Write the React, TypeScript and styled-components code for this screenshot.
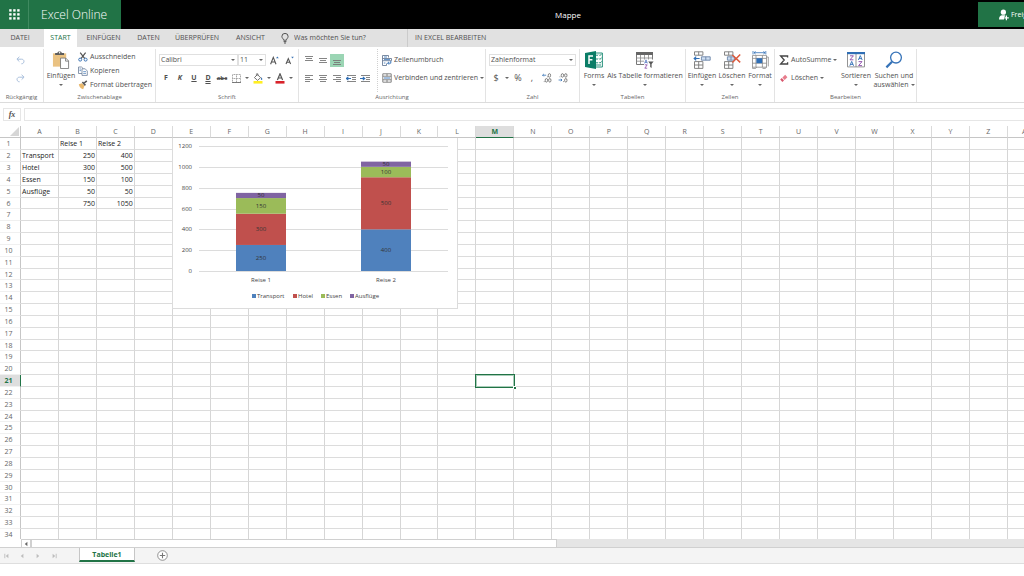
import React from "react";
import styled, { createGlobalStyle, css } from "styled-components";

const GREEN = "#217346";
const UI_FONT = '"Open Sans", "Noto Sans", sans-serif';

const GlobalStyle = createGlobalStyle`
  *, *::before, *::after { box-sizing: border-box; }
  html, body, #root { height: 100%; margin: 0; }
  body { background: #fff; color: #505050; font: 7px/10px ${UI_FONT}; overflow: hidden; }
  button, select, input { font: inherit; color: inherit; border: 0; padding: 0; margin: 0; background: none; border-radius: 0; }
  svg { display: block; flex: none; }
`;

const Page = styled.div`
  display: flex;
  flex-direction: column;
  height: 100vh;
  padding-bottom: 12px;
`;

/* ---------- header ---------- */
const Header = styled.header`
  display: flex;
  height: 29px;
  flex: none;
  background: #000;
  color: #fff;
  overflow: hidden;
`;
const Launcher = styled.button`
  width: 29px;
  background: ${GREEN};
  border-right: 1px solid #3f8a60;
  display: grid;
  place-items: center;
`;
const Brand = styled.div`
  width: 92px;
  padding-left: 12px;
  background: ${GREEN};
  font-size: 12px;
  font-weight: 300;
  line-height: 30px;
  white-space: nowrap;
`;
const DocTitle = styled.h1`
  flex: 1;
  margin: 0;
  padding-left: 37px;
  text-align: center;
  font-size: 8px;
  font-weight: 400;
  line-height: 30px;
`;
const Share = styled.button`
  display: flex;
  align-items: center;
  gap: 2px;
  width: 46px;
  height: 25px;
  margin-top: 2px;
  padding-left: 21px;
  background: ${GREEN};
  white-space: nowrap;
  overflow: hidden;
`;

/* ---------- ribbon tabs ---------- */
const TabBar = styled.nav`
  display: flex;
  height: 18px;
  flex: none;
  align-items: stretch;
  background: #e1e1e1;
  white-space: nowrap;
`;
const Tab = styled.button<{ $w: number; $after?: number; $active?: boolean }>`
  width: ${(p) => p.$w}px;
  margin-right: ${(p) => p.$after ?? 0}px;
  text-align: center;
  ${(p) => p.$active && css`background: #fff; color: ${GREEN};`}
`;
const TellMe = styled.label`
  display: flex;
  align-items: center;
  gap: 5px;
  width: 127px;
  border-right: 1px solid #cbcbcb;
`;
const TellInput = styled.input`
  width: 90px;
  outline: 0;
  &::placeholder { color: #505050; opacity: 1; }
`;
const EditLink = styled.a`
  padding-left: 7px;
  line-height: 18px;
  color: inherit;
  text-decoration: none;
`;

/* ---------- ribbon ---------- */
const Ribbon = styled.section`
  display: flex;
  height: 56px;
  flex: none;
  padding-top: 2px;
  border-bottom: 1px solid #dcdcdc;
  white-space: nowrap;
`;
const GroupBox = styled.section<{ $w: number }>`
  display: flex;
  flex-direction: column;
  width: ${(p) => p.$w}px;
  flex: none;
  border-right: 1px solid #e3e3e3;
`;
const GroupBody = styled.div<{ $pad: number }>`
  display: flex;
  flex: 1;
  padding-left: ${(p) => p.$pad}px;
`;
const GroupName = styled.h2`
  margin: 0;
  text-align: center;
  font-size: 6px;
  font-weight: 400;
  line-height: 10px;
  color: #666;
`;
const ClipActions = styled.div`
  display: flex;
  flex-direction: column;
  padding: 1px 0 0 2px;
`;
const TwoRows = styled.div<{ $w?: number; $divided?: boolean }>`
  display: flex;
  flex-direction: column;
  width: ${(p) => (p.$w ? `${p.$w}px` : "auto")};
  padding-top: 2px;
  ${(p) => p.$divided && css`padding-left: 4px; border-left: 1px dotted #d0d0d0;`}
`;
const Line = styled.div`
  display: flex;
  align-items: center;
  height: 18px;
`;
const BigButton = styled.button<{ $w: number }>`
  display: flex;
  flex-direction: column;
  align-items: center;
  width: ${(p) => p.$w}px;
  height: 41px;
  padding-top: 2px;
`;
const BigLabel = styled.span`
  display: flex;
  flex-direction: column;
  align-items: center;
  height: 20px;
  margin-top: 2px;
  line-height: 9px;
`;
const CaretSlot = styled.span`
  display: flex;
  align-items: center;
  gap: 2px;
  height: 9px;
`;
const SmallButton = styled.button<{ $tall?: boolean }>`
  display: flex;
  align-items: center;
  gap: 2px;
  height: ${(p) => (p.$tall ? 18 : 14)}px;
`;
const IconButton = styled.button<{ $w?: number; $on?: boolean }>`
  display: grid;
  place-items: center;
  width: ${(p) => p.$w ?? 14}px;
  height: 13px;
  ${(p) => p.$on && css`background: #9bd5b4;`}
`;
const Glyph = styled.span<{ $kind?: "italic" | "under" | "double" | "strike" }>`
  font-weight: 700;
  ${(p) => p.$kind === "italic" && css`font-style: italic;`}
  ${(p) => p.$kind === "under" && css`text-decoration: underline;`}
  ${(p) => p.$kind === "double" && css`text-decoration: underline double;`}
  ${(p) => p.$kind === "strike" && css`font-size: 6px; text-decoration: line-through;`}
`;
const Sign = styled.span`
  font-size: 9px;
`;
const SelectWrap = styled.label<{ $w: number }>`
  display: grid;
  align-items: center;
  width: ${(p) => p.$w}px;
  height: 12px;
  border: 1px solid #e0e0e0;
  & > * { grid-area: 1 / 1; }
  & > svg { justify-self: end; margin-right: 2px; pointer-events: none; }
`;
const Select = styled.select`
  appearance: none;
  width: 100%;
  height: 10px;
  padding-left: 1px;
  outline: 0;
`;

/* ---------- formula bar ---------- */
const FormulaBar = styled.div`
  display: flex;
  gap: 3px;
  height: 23px;
  flex: none;
  padding: 5px 0 5px 3px;
`;
const FxButton = styled.button`
  width: 18px;
  border: 1px solid #e6e6e6;
  font: italic 700 8px/10px "Liberation Serif", serif;
`;
const FormulaInput = styled.input`
  flex: 1;
  border: 1px solid #e6e6e6;
  border-right: 0;
  outline: 0;
`;

/* ---------- sheet ---------- */
const SheetArea = styled.main`
  position: relative;
  flex: 1;
  min-height: 0;
  overflow: hidden;
`;
const Grid = styled.table`
  width: calc(100% + 22px);
  table-layout: fixed;
  border-collapse: separate;
  border-spacing: 0;
  line-height: 10px;
`;
const RowHeadCol = styled.col`
  width: 21px;
`;
const HeadRow = styled.tr`
  height: 12px;
`;
const Row = styled.tr`
  height: 12px;
  &:nth-child(6n) { height: 11px; }
  &:nth-child(6n) > * { line-height: 9px; }
`;
const Corner = styled.td`
  padding: 0 1px 1px 0;
  border-right: 1px solid #c6c6c6;
  border-bottom: 1px solid #c6c6c6;
  & > svg { margin-left: auto; }
`;
const ColHead = styled.th<{ $active?: boolean }>`
  padding: 0;
  font-weight: 400;
  color: #666;
  border-right: 1px solid #dadada;
  border-bottom: 1px solid #c6c6c6;
  ${(p) => p.$active && css`
    font-weight: 700;
    color: ${GREEN};
    background: #dedede;
    border-bottom-color: ${GREEN};
  `}
`;
const RowHead = styled.th<{ $active?: boolean }>`
  padding: 0 3px 0 0;
  font-weight: 400;
  color: #666;
  border-right: 1px solid #c6c6c6;
  border-bottom: 1px solid #f0f0f0;
  ${(p) => p.$active && css`
    font-weight: 700;
    color: ${GREEN};
    background: #dedede;
    border-right-color: ${GREEN};
  `}
`;
const Cell = styled.td<{ $num?: boolean; $active?: boolean }>`
  padding: 0 1px;
  color: #222;
  white-space: nowrap;
  text-align: ${(p) => (p.$num ? "right" : "left")};
  border-right: 1px solid #d6d6d6;
  border-bottom: 1px solid #dcdcdc;
  ${(p) => p.$active && css`
    position: relative;
    &::before {
      content: "";
      position: absolute;
      inset: -1px -2px -2px -1px;
      border: 1px solid ${GREEN};
      box-shadow: inset 0 0 0 1px #a9cdb9;
    }
    &::after {
      content: "";
      position: absolute;
      right: -3px;
      bottom: -3px;
      width: 3px;
      height: 3px;
      background: ${GREEN};
      border-left: 1px solid #fff;
      border-top: 1px solid #fff;
    }
  `}
`;
const ChartFrame = styled.figure`
  position: absolute;
  left: 172px;
  top: 12px;
  margin: 0;
  background: #fff;
  border: 1px solid #dcdcdc;
  border-top: 0;
`;

/* ---------- bottom ---------- */
const ScrollBar = styled.div`
  display: flex;
  height: 9px;
  flex: none;
  padding-left: 21px;
  border-bottom: 1px solid #d0d0d0;
`;
const ScrollLeft = styled.button`
  display: grid;
  place-items: center;
  width: 10px;
  color: #666;
  border: 1px solid #d0d0d0;
  border-bottom: 0;
`;
const Track = styled.div`
  flex: 1;
  background: #e5e5e5;
`;
const Thumb = styled.div`
  width: 53%;
  height: 8px;
  background: #fff;
  border: 1px solid #d0d0d0;
  border-bottom: 0;
`;
const SheetTabs = styled.footer`
  display: flex;
  height: 16px;
  flex: none;
  background: #f4f4f4;
  border-bottom: 1px solid #dedede;
`;
const NavButtons = styled.div`
  display: flex;
  width: 79px;
  align-items: center;
  color: #bdbdbd;
`;
const NavButton = styled.button`
  display: grid;
  place-items: center;
  width: 16px;
  &:first-child { width: 14px; }
`;
const SheetTab = styled.button`
  width: 56px;
  height: 14px;
  background: #fff;
  border: 1px solid #c6c6c6;
  border-top: 0;
  border-bottom: 2px solid ${GREEN};
  color: ${GREEN};
  font-weight: 700;
  line-height: 11px;
`;
const AddSheet = styled.button`
  margin-left: 22px;
`;

/* ---------- icons ---------- */
const Caret = () => (
  <svg width="4" height="2" viewBox="0 0 4 2"><path d="M0 0h4L2 2z" fill="#666" /></svg>
);
const Waffle = () => (
  <svg width="11" height="11" viewBox="0 0 11 11" fill="#fff">
    {[0, 4, 8].map((y) => [0, 4, 8].map((x) => <rect key={`${x}-${y}`} x={x + 0.2} y={y + 0.2} width="2.4" height="2.4" />))}
  </svg>
);
const PersonAdd = () => (
  <svg width="10" height="12" viewBox="0 0 10 12" fill="#fff">
    <circle cx="4.4" cy="3.2" r="2.6" />
    <path d="M0 10.4C0 7.6 1.6 6.2 3 6.2h2.8l.4.4v1.2H5v2.6z" />
    <path d="M6.8 6.4h1.2v1.8H9.8v1.2H8v1.8H6.8V9.4H5.2V8.2h1.6z" />
  </svg>
);
const Bulb = () => (
  <svg width="8" height="11" viewBox="0 0 8 11" fill="none" stroke="#444" strokeWidth="0.9">
    <path d="M2.6 7.2C2.6 5.8.9 5.2.9 3.4a3.1 3 0 0 1 6.2 0c0 1.8-1.7 2.4-1.7 3.8zM2.6 8.6h2.8M3 10h2" />
  </svg>
);
const Undo = ({ flip }: { flip?: boolean }) => (
  <svg width="9" height="9" viewBox="0 0 9 9" fill="none" stroke="#a9bfdc" strokeWidth="1">
    <g transform={flip ? "translate(9 0) scale(-1 1)" : undefined}>
      <path d="M3.4.8.9 3.2l2.5 2.4M1 3.2h4.6c3.2 0 3.2 4.6-.2 4.6" />
    </g>
  </svg>
);
const Clipboard = () => (
  <svg width="18" height="18" viewBox="0 0 18 19">
    <path d="M.5 2.5h14v14H.5z" fill="#eac282" />
    <path d="M2.8 4.2V2h2.4c.2-2 4.4-2 4.6 0h2.4v2.2z" fill="#5c5c5c" />
    <circle cx="7.5" cy="1.9" r=".8" fill="#fff" />
    <path d="M8.5 7.5H14l3 3v8H8.5z" fill="#fff" stroke="#777" strokeWidth=".9" />
    <path d="M13.8 7.5v3.2H17" fill="none" stroke="#777" strokeWidth=".9" />
  </svg>
);
const Scissors = () => (
  <svg width="10" height="10" viewBox="0 0 10 10" fill="none">
    <path d="m2.2.6 4.6 6M7.6.6 3 6.6" stroke="#555" strokeWidth="1.2" />
    <circle cx="2.2" cy="7.6" r="1.5" stroke="#3f76b5" />
    <circle cx="7.6" cy="7.6" r="1.5" stroke="#3f76b5" />
  </svg>
);
const Copy = () => (
  <svg width="10" height="10" viewBox="0 0 10 10" fill="#fff" stroke="#6b7e99" strokeWidth=".8">
    <path d="M.5 1h3L5 2.4V7.5H.5z" />
    <path d="M4 2.8h3.2L9.3 5v4.4H4z" />
    <path d="M1.5 3h1.6M1.5 4.6h1.6M5.2 5.6h2.8M5.2 7.4h2.8" stroke="#3f76b5" strokeWidth=".7" />
  </svg>
);
const Brush = () => (
  <svg width="10" height="10" viewBox="0 0 10 10">
    <path d="M.8 4.2 4 3.2l2.4 2.6-1.2 3.4C3.4 9 1.2 7 .8 4.2z" fill="#e9b86c" />
    <path d="m3.8 2.6 1.2-1 3 3.2-1.2 1.2z" fill="#555" />
    <path d="M6.2 3 8.8.8" stroke="#555" strokeWidth="1.6" />
  </svg>
);
const Borders = () => (
  <svg width="9" height="9" viewBox="0 0 9 9" fill="none" stroke="#888" strokeWidth=".8">
    <path d="M.5.5h8v8h-8zM4.5.5v8M.5 4.5h8" strokeDasharray="1 .6" />
    <path d="M0 8.5h9" stroke="#666" />
  </svg>
);
const Fill = () => (
  <svg width="10" height="11" viewBox="0 0 10 11" fill="none">
    <path d="m1.4 4.6 3-3 3.2 3-3 2.8z" stroke="#666" strokeWidth=".9" />
    <path d="M3.4 3V.8h1.6V3" stroke="#666" strokeWidth=".7" />
    <path d="M8.4 4.2c1.4 1.6 1 2.8.2 2.8s-1-1.2-.2-2.8z" fill="#3f76b5" />
    <path d="M.5 8h9v2.6h-9z" fill="#ffee22" />
  </svg>
);
const FontColor = () => (
  <svg width="10" height="11" viewBox="0 0 10 11" fill="none">
    <path d="M2.4 7 5 .8 7.6 7M3.4 5h3.2" stroke="#555" strokeWidth="1.2" />
    <path d="M.5 8h9v2.6h-9z" fill="#d8232a" />
  </svg>
);
const FontSize = ({ down }: { down?: boolean }) => (
  <svg width="9" height="9" viewBox="0 0 9 9" fill="none">
    <path d={down ? "M1 8 3.3 2.6 5.6 8M1.8 6.2h3" : "M.6 8.2 3.3 1.4 6 8.2M1.6 6h3.4"} stroke="#555" strokeWidth="1.1" />
    <path d={down ? "M6.2.8h2.6L7.5 2.4z" : "M6 2.2h2.8L7.4.6z"} fill="#3f76b5" />
  </svg>
);
const Bars = ({ rows }: { rows: [number, number, number][] }) => (
  <svg width="10" height="9" viewBox="0 0 10 9" stroke="#777" strokeWidth=".9">
    {rows.map(([y, a, b]) => <path key={y} d={`M${a} ${y}H${b}`} />)}
  </svg>
);
const Indent = ({ right }: { right?: boolean }) => (
  <svg width="10" height="9" viewBox="0 0 10 9" fill="none" strokeWidth=".9">
    <path d="M1 1.5h9M6 3.5h4M6 5.5h4M1 7.5h9" stroke="#777" />
    <path d={right ? "M0 4.5h4.6M2.8 2.8l2 1.7-2 1.7" : "M.4 4.5H5M2.4 2.8l-2 1.7 2 1.7"} stroke="#2f6eb5" strokeWidth="1.1" />
  </svg>
);
const Wrap = () => (
  <svg width="10" height="11" viewBox="0 0 10 11" fill="none" strokeWidth=".9">
    <path d="M6.5 2.5v-2h-6v10h4v-2M.5 3.5h9v2.2h-9" stroke="#6b7e99" />
    <path d="M2 2h3M2 4.6h6M1.8 8h1.6" stroke="#2f6eb5" strokeWidth=".8" />
    <path d="M8.8 6v2.2H5.6m1.4-1.4L5.6 8.2 7 9.6" stroke="#2f6eb5" />
  </svg>
);
const Merge = () => (
  <svg width="10" height="10" viewBox="0 0 10 10" fill="none" strokeWidth=".9">
    <path d="M.8.8h8.4v8.4H.8zM.8 3.2h8.4M.8 6.8h8.4M5 .8v2.4M5 6.8v2.4" stroke="#777" />
    <path d="M2 5h6" stroke="#2f6eb5" />
  </svg>
);
const Decimals = ({ less }: { less?: boolean }) => (
  <svg width="10" height="10" viewBox="0 0 10 10" fill="none" stroke="#666" strokeWidth=".8">
    <ellipse cx={less ? 4.4 : 7.4} cy="2.4" rx="1.2" ry="1.8" />
    {less && <ellipse cx="7.8" cy="2.4" rx="1.2" ry="1.8" />}
    <ellipse cx="7.8" cy="7.3" rx="1.2" ry="1.8" />
    {!less && <ellipse cx="4.4" cy="7.3" rx="1.2" ry="1.8" />}
    <path d={less ? "M5 8.6h.8M1.6 3.8h.8" : "M1.8 8.6h.8M5 3.8h.8"} />
    <path d={less ? "M.6 7h3.4M2.8 5.8 4 7 2.8 8.2" : "M4.2 2.2H.6M1.8 1 .6 2.2l1.2 1.2"} stroke="#2f6eb5" />
  </svg>
);
const FormsIcon = () => (
  <svg width="18" height="18" viewBox="0 0 18 18">
    <path d="M10 2h7.4v14H10z" fill="#fff" stroke="#13866f" strokeWidth=".9" />
    <path d="M11 4.2h2M11 8h2M11 11.8h2M14 3.6l1 1 1.6-1.8M14 7.4l1 1 1.6-1.8M14 11.2l1 1 1.6-1.8M11 14h5" stroke="#13866f" strokeWidth=".9" fill="none" />
    <path d="M0 2 11 0v18L0 16z" fill="#0b7d67" />
    <path d="M4 13V5h4M4 8.8h3.4" fill="none" stroke="#fff" strokeWidth="1.5" />
  </svg>
);
const TableFormat = () => (
  <svg width="18" height="18" viewBox="0 0 18 18" fill="none">
    <path d="M.5 1.5h16v12H.5z" fill="#fff" stroke="#777" />
    <path d="M0 1h17v3H0z" fill="#666" />
    <path d="M.5 7h16M.5 10.2h16M4.5 4v9.5M8.5 4v9.5M12.5 4v9.5" stroke="#888" strokeWidth=".8" />
    <path d="M8 8.5h10V18H8z" fill="#fff" />
    <path d="m8.6 12.4 1.4-3.6 1.4 3.6M9 11.4h2" stroke="#5577c0" strokeWidth=".8" />
    <path d="M8.8 13.8h2.4l-2.4 3.4h2.4" stroke="#8a4aa8" strokeWidth=".8" />
    <path d="M12.2 10.4h5.4l-2 2.6v4l-1.4-1v-3z" fill="#555" />
  </svg>
);
const InsertCells = () => (
  <svg width="18" height="18" viewBox="0 0 18 18" fill="none" stroke="#777" strokeWidth=".9">
    <path d="M1.5.8h8.4v3.4H1.5zM5.7.8v3.4M1.5 10.6h8.4v6.8H1.5zM5.7 10.6v6.8M1.5 14h8.4" />
    <path d="M8.4 5.8h8.8v3.4H8.4zM12.8 5.8v3.4" fill="#cfdff2" stroke="#6b85a8" />
    <path d="M1 7.5h5.6M3.2 5.6 1.2 7.5l2 1.9" stroke="#2f6eb5" strokeWidth="1.2" />
  </svg>
);
const DeleteCells = () => (
  <svg width="18" height="18" viewBox="0 0 18 18" fill="none" stroke="#777" strokeWidth=".9">
    <path d="M1.5.8h8.4v3.4H1.5zM5.7.8v3.4M1.5 10.6h8.4v6.8H1.5zM5.7 10.6v6.8M1.5 14h8.4" />
    <path d="M4.4 5.8h7v3.4h-7zM8 5.8v3.4" fill="#cfdff2" stroke="#6b85a8" />
    <path d="m9.4 4 7.8 7.4M17.2 3.6l-7.8 8" stroke="#dd5a3c" strokeWidth="1.5" />
  </svg>
);
const FormatCells = () => (
  <svg width="18" height="18" viewBox="0 0 18 18" fill="none" stroke="#888" strokeWidth=".8">
    <path d="M1.5 4.4h14v11.8h-14zM5 4.4v11.8M11.4 4.4v11.8M1.5 7.4h14M1.5 12.2h14M15.5 6h1.8v9.4M1.5 16.2v1.2h3.2l1-1.2M15.5 16.2l-1 1.2h-3" />
    <path d="M5.4 7.2h5.8v5H5.4z" fill="#2f6eb5" stroke="none" />
    <path d="M2 0v3.4M14.8 0v3.4M3 1.7h11M4.6.4 3 1.7 4.6 3M12.4.4 14 1.7 12.4 3" stroke="#2f6eb5" />
  </svg>
);
const Sigma = () => (
  <svg width="10" height="10" viewBox="0 0 10 10" fill="none" stroke="#444" strokeWidth="1.3">
    <path d="M8.6 2.6V1H1.6L5.2 5 1.6 9h7V7.2" />
  </svg>
);
const Eraser = () => (
  <svg width="10" height="9" viewBox="0 0 10 9">
    <path d="M3.4 3.6 6.2.8l2.2 2.4-2.8 2.8z" fill="#e77c8c" />
    <path d="m1.2 5.6 1.6-1.6L5 6.4 3.4 8z" fill="#d8566c" />
  </svg>
);
const SortIcon = () => (
  <svg width="18" height="18" viewBox="0 0 18 18" fill="none" strokeWidth=".9">
    <path d="M.5 1.5h17v14.4H.5zM9 3v13" stroke="#888" />
    <path d="M0 1h18v2.2H0z" fill="#2f6eb5" />
    <path d="M3 4.8h3.4L3 8.8h3.4M11.6 10.6H15l-3.4 4H15" stroke="#8a4aa8" />
    <path d="m2.8 14.8 1.9-4.4 1.9 4.4M3.4 13.4h2.6M11.4 9l1.9-4.4L15.2 9M12 7.6h2.6" stroke="#2f6eb5" />
  </svg>
);
const SearchIcon = () => (
  <svg width="18" height="18" viewBox="0 0 18 18" fill="none" stroke="#3673b8">
    <circle cx="11" cy="6.6" r="5.4" strokeWidth="1.3" />
    <path d="m7 10.8-5.6 5.6" strokeWidth="2.2" />
  </svg>
);
const NavArrow = ({ dir, end }: { dir: "l" | "r"; end?: boolean }) => (
  <svg width="6" height="6" viewBox="0 0 6 6">
    <g transform={dir === "r" ? "translate(6 0) scale(-1 1)" : undefined}>
      <path d="M4.4.8v4.4L1.8 3z" fill="currentColor" />
      {end && <path d="M.8.8v4.4" stroke="currentColor" strokeWidth=".9" />}
    </g>
  </svg>
);
const CirclePlus = () => (
  <svg width="11" height="11" viewBox="0 0 11 11" fill="none" stroke="#777">
    <circle cx="5.5" cy="5.5" r="4.8" fill="#fff" strokeWidth=".8" />
    <path d="M5.5 2.8v5.4M2.8 5.5h5.4" strokeWidth="1.1" />
  </svg>
);
const SelectAll = () => (
  <svg width="9" height="9" viewBox="0 0 9 9"><path d="M9 0v9H0z" fill="#d6d6d6" /></svg>
);

/* ---------- composed parts ---------- */
function Group({ name, w, pad = 3, children }: { name: string; w: number; pad?: number; children: React.ReactNode }) {
  return (
    <GroupBox $w={w}>
      <GroupBody $pad={pad}>{children}</GroupBody>
      <GroupName>{name}</GroupName>
    </GroupBox>
  );
}
function Big({ icon, w, label, second }: { icon: React.ReactNode; w: number; label: string; second?: string }) {
  return (
    <BigButton $w={w}>
      {icon}
      <BigLabel>
        {label}
        <CaretSlot>{second}<Caret /></CaretSlot>
      </BigLabel>
    </BigButton>
  );
}
function Picker({ w, value, label }: { w: number; value: string; label: string }) {
  return (
    <SelectWrap $w={w}>
      <Select aria-label={label}><option>{value}</option></Select>
      <Caret />
    </SelectWrap>
  );
}
const Drop = ({ label }: { label: string }) => (
  <IconButton $w={8} aria-label={label}><Caret /></IconButton>
);

const SERIES = [
  { name: "Transport", color: "#4f81bd", values: [250, 400], legend: 79 },
  { name: "Hotel", color: "#c0504d", values: [300, 500], legend: 120 },
  { name: "Essen", color: "#9bbb59", values: [150, 100], legend: 148 },
  { name: "Ausflüge", color: "#8064a2", values: [50, 50], legend: 177 },
];
const BARS = [{ label: "Reise 1", x: 63 }, { label: "Reise 2", x: 188 }];
const yOf = (v: number) => 133 - (v * 125) / 1200;

function Chart() {
  return (
    <ChartFrame>
      <svg width="284" height="170" viewBox="0 0 284 170" fontSize="6" fill="#444">
        {[0, 200, 400, 600, 800, 1000, 1200].map((v) => (
          <g key={v}>
            <path d={`M26 ${Math.round(yOf(v)) + 0.5}H275`} stroke="#dcdcdc" />
            <text x="19" y={yOf(v) + 2} textAnchor="end">{v}</text>
          </g>
        ))}
        {BARS.map((bar, i) => {
          let base = 0;
          return (
            <g key={bar.label}>
              {SERIES.map((s) => {
                const from = base;
                base += s.values[i];
                const top = yOf(base);
                const height = yOf(from) - top;
                return (
                  <g key={s.name}>
                    <rect x={bar.x} y={top} width="50" height={height} fill={s.color} />
                    <text x={bar.x + 25} y={top + height / 2 + 2} textAnchor="middle" fill="#333">{s.values[i]}</text>
                  </g>
                );
              })}
              <text x={bar.x + 25} y="144" textAnchor="middle">{bar.label}</text>
            </g>
          );
        })}
        {SERIES.map((s) => (
          <g key={s.name}>
            <rect x={s.legend} y="156" width="4" height="4" fill={s.color} />
            <text x={s.legend + 5} y="160">{s.name}</text>
          </g>
        ))}
      </svg>
    </ChartFrame>
  );
}

const COLUMNS = [..."ABCDEFGHIJKLMNOPQRSTUVWXYZ", "AA"];
const DATA: (string | number)[][] = [
  ["", "Reise 1", "Reise 2"],
  ["Transport", 250, 400],
  ["Hotel", 300, 500],
  ["Essen", 150, 100],
  ["Ausflüge", 50, 50],
  ["", 750, 1050],
];

function Sheet() {
  return (
    <SheetArea>
      <Grid>
        <colgroup><RowHeadCol />{COLUMNS.map((c) => <col key={c} />)}</colgroup>
        <thead>
          <HeadRow>
            <Corner><SelectAll /></Corner>
            {COLUMNS.map((c) => <ColHead key={c} scope="col" $active={c === "M"}>{c}</ColHead>)}
          </HeadRow>
        </thead>
        <tbody>
          {Array.from({ length: 34 }, (_, r) => (
            <Row key={r}>
              <RowHead scope="row" $active={r === 20}>{r + 1}</RowHead>
              {COLUMNS.map((c, i) => {
                const value = DATA[r]?.[i];
                return (
                  <Cell key={c} $num={typeof value === "number"} $active={r === 20 && c === "M"}>{value}</Cell>
                );
              })}
            </Row>
          ))}
        </tbody>
      </Grid>
      <Chart />
    </SheetArea>
  );
}

export default function App() {
  return (
    <Page>
      <GlobalStyle />
      <Header>
        <Launcher aria-label="Apps"><Waffle /></Launcher>
        <Brand>Excel Online</Brand>
        <DocTitle>Mappe</DocTitle>
        <Share><PersonAdd />Freigeben</Share>
      </Header>
      <TabBar>
        <Tab $w={40} $after={4}>DATEI</Tab>
        <Tab $w={33} $active>START</Tab>
        <Tab $w={53}>EINFÜGEN</Tab>
        <Tab $w={37}>DATEN</Tab>
        <Tab $w={60}>ÜBERPRÜFEN</Tab>
        <Tab $w={47} $after={7}>ANSICHT</Tab>
        <TellMe><Bulb /><TellInput aria-label="Was möchten Sie tun?" placeholder="Was möchten Sie tun?" /></TellMe>
        <EditLink href="#">IN EXCEL BEARBEITEN</EditLink>
      </TabBar>
      <Ribbon>
        <Group name="Rückgängig" w={44} pad={13}>
          <TwoRows>
            <Line><IconButton aria-label="Rückgängig"><Undo /></IconButton></Line>
            <Line><IconButton aria-label="Wiederholen"><Undo flip /></IconButton></Line>
          </TwoRows>
        </Group>
        <Group name="Zwischenablage" w={112} pad={2}>
          <Big icon={<Clipboard />} w={30} label="Einfügen" />
          <ClipActions>
            <SmallButton><Scissors />Ausschneiden</SmallButton>
            <SmallButton><Copy />Kopieren</SmallButton>
            <SmallButton><Brush />Format übertragen</SmallButton>
          </ClipActions>
        </Group>
        <Group name="Schrift" w={143}>
          <TwoRows>
            <Line>
              <Picker w={79} value="Calibri" label="Schriftart" />
              <Picker w={28} value="11" label="Schriftgrad" />
              <IconButton $w={16} aria-label="Schrift vergrößern"><FontSize /></IconButton>
              <IconButton aria-label="Schrift verkleinern"><FontSize down /></IconButton>
            </Line>
            <Line>
              <IconButton><Glyph>F</Glyph></IconButton>
              <IconButton><Glyph $kind="italic">K</Glyph></IconButton>
              <IconButton><Glyph $kind="under">U</Glyph></IconButton>
              <IconButton><Glyph $kind="double">D</Glyph></IconButton>
              <IconButton><Glyph $kind="strike">abc</Glyph></IconButton>
              <IconButton aria-label="Rahmen"><Borders /></IconButton>
              <Drop label="Rahmenauswahl" />
              <IconButton aria-label="Füllfarbe"><Fill /></IconButton>
              <Drop label="Füllfarbenauswahl" />
              <IconButton aria-label="Schriftfarbe"><FontColor /></IconButton>
              <Drop label="Schriftfarbenauswahl" />
            </Line>
          </TwoRows>
        </Group>
        <Group name="Ausrichtung" w={187}>
          <TwoRows $w={75}>
            <Line>
              <IconButton aria-label="Oben"><Bars rows={[[0.5, 1, 9], [2.5, 2, 8], [4.5, 1, 9]]} /></IconButton>
              <IconButton aria-label="Mitte"><Bars rows={[[2.5, 1, 9], [4.5, 2, 8], [6.5, 1, 9]]} /></IconButton>
              <IconButton $on aria-label="Unten"><Bars rows={[[4.5, 1, 9], [6.5, 2, 8], [8.5, 1, 9]]} /></IconButton>
            </Line>
            <Line>
              <IconButton aria-label="Links"><Bars rows={[[1.5, 1, 9], [3.5, 1, 6], [5.5, 1, 9], [7.5, 1, 6]]} /></IconButton>
              <IconButton aria-label="Zentriert"><Bars rows={[[1.5, 1, 9], [3.5, 2, 8], [5.5, 1, 9], [7.5, 2, 8]]} /></IconButton>
              <IconButton aria-label="Rechts"><Bars rows={[[1.5, 1, 9], [3.5, 4, 9], [5.5, 1, 9], [7.5, 4, 9]]} /></IconButton>
              <IconButton aria-label="Einzug verkleinern"><Indent /></IconButton>
              <IconButton aria-label="Einzug vergrößern"><Indent right /></IconButton>
            </Line>
          </TwoRows>
          <TwoRows $divided>
            <SmallButton $tall><Wrap />Zeilenumbruch</SmallButton>
            <SmallButton $tall><Merge />Verbinden und zentrieren<Caret /></SmallButton>
          </TwoRows>
        </Group>
        <Group name="Zahl" w={94}>
          <TwoRows>
            <Line><Picker w={87} value="Zahlenformat" label="Zahlenformat" /></Line>
            <Line>
              <IconButton><Sign>$</Sign></IconButton>
              <Drop label="Währungsauswahl" />
              <IconButton><Sign>%</Sign></IconButton>
              <IconButton><Sign>,</Sign></IconButton>
              <IconButton $w={16} aria-label="Dezimalstelle hinzufügen"><Decimals /></IconButton>
              <IconButton $w={16} aria-label="Dezimalstelle entfernen"><Decimals less /></IconButton>
            </Line>
          </TwoRows>
        </Group>
        <Group name="Tabellen" w={106}>
          <Big icon={<FormsIcon />} w={22} label="Forms" />
          <Big icon={<TableFormat />} w={80} label="Als Tabelle formatieren" />
        </Group>
        <Group name="Zellen" w={89} pad={1}>
          <Big icon={<InsertCells />} w={30} label="Einfügen" />
          <Big icon={<DeleteCells />} w={30} label="Löschen" />
          <Big icon={<FormatCells />} w={26} label="Format" />
        </Group>
        <Group name="Bearbeiten" w={142} pad={4}>
          <TwoRows $w={60}>
            <SmallButton $tall><Sigma />AutoSumme<Caret /></SmallButton>
            <SmallButton $tall><Eraser />Löschen<Caret /></SmallButton>
          </TwoRows>
          <Big icon={<SortIcon />} w={34} label="Sortieren" />
          <Big icon={<SearchIcon />} w={42} label="Suchen und" second="auswählen" />
        </Group>
      </Ribbon>
      <FormulaBar>
        <FxButton>fx</FxButton>
        <FormulaInput aria-label="Bearbeitungsleiste" />
      </FormulaBar>
      <Sheet />
      <ScrollBar>
        <ScrollLeft aria-label="Nach links"><NavArrow dir="l" /></ScrollLeft>
        <Track><Thumb /></Track>
      </ScrollBar>
      <SheetTabs>
        <NavButtons>
          <NavButton aria-label="Erstes Blatt"><NavArrow dir="l" end /></NavButton>
          <NavButton aria-label="Vorheriges Blatt"><NavArrow dir="l" /></NavButton>
          <NavButton aria-label="Nächstes Blatt"><NavArrow dir="r" /></NavButton>
          <NavButton aria-label="Letztes Blatt"><NavArrow dir="r" end /></NavButton>
        </NavButtons>
        <SheetTab>Tabelle1</SheetTab>
        <AddSheet aria-label="Neues Blatt"><CirclePlus /></AddSheet>
      </SheetTabs>
    </Page>
  );
}
